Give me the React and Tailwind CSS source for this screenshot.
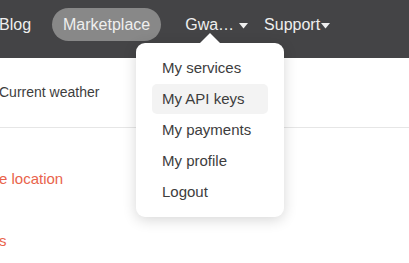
import React from "react";

const menuItems = ["My services", "My API keys", "My payments", "My profile", "Logout"];

function Caret({ className }) {
  return (
    <svg width="9" height="6" viewBox="0 0 9 6" className={className}>
      <path d="M0 0 L9 0 L4.5 5.5 Z" fill="#efefef" />
    </svg>
  );
}

export default function App() {
  return (
    <div className="relative w-[409px] h-[263px] overflow-hidden bg-white font-['Liberation_Sans',Arial,sans-serif]">
      {/* --- Top bar --- */}
      <nav className="h-[58px] bg-[#444446] flex items-start pt-[8px] text-[16px] text-[#efefef]">
        <span className="h-[33px] flex items-center -ml-[1px]">Blog</span>
        <span className="h-[33px] ml-[21px] px-[11px] flex items-center rounded-full bg-[#888888]">
          Marketplace
        </span>
        <span className="h-[33px] ml-[24px] flex items-center">
          Gwa…
          <Caret className="ml-[5px] mt-[2px]" />
        </span>
        <span className="h-[33px] ml-[16px] flex items-center">
          Support
          <Caret className="ml-[1px] mt-[2px]" />
        </span>
      </nav>

      {/* --- Page content --- */}
      <div className="text-[14px] text-[#3d3d3d]">
        <div className="pt-[24px] pb-[25px] border-b border-[#e6e6e6]">
          <div className="leading-[20px] -ml-[1px]">Current weather</div>
        </div>
        <div className="text-[15px] text-[#e9634b] leading-[20px] -ml-[1px]">
          <div className="mt-[41px]">e location</div>
          <div className="mt-[42px]">s</div>
        </div>
      </div>

      {/* --- Account dropdown --- */}
      <div className="absolute left-[136px] top-[43px] w-[148px] rounded-[9px] bg-white shadow-[0_3px_14px_rgba(0,0,0,0.16)] px-[16px] py-[10px]">
        <div className="absolute left-[64px] -top-[10px] w-0 h-0 border-l-[10px] border-r-[10px] border-b-[10px] border-l-transparent border-r-transparent border-b-white" />
        <ul className="flex flex-col gap-px">
          {menuItems.map((item, i) => (
            <li
              key={item}
              className={`h-[30px] flex items-center px-[10px] rounded-[5px] text-[15px] text-[#3d3d3d] ${
                i === 1 ? "bg-[#f3f3f3]" : ""
              }`}
            >
              {item}
            </li>
          ))}
        </ul>
      </div>
    </div>
  );
}
